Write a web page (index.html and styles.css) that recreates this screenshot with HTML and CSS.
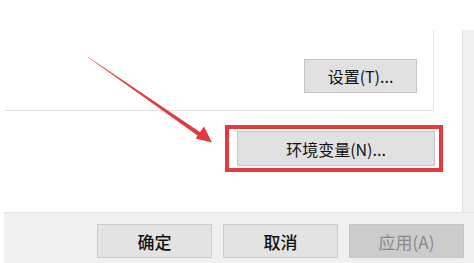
FILE: index.html
```html
<!DOCTYPE html>
<html lang="zh-CN">
<head>
<meta charset="utf-8">
<title>系统属性</title>
<link rel="stylesheet" href="styles.css">
</head>
<body>
<div class="window">
  <div class="main">
    <div class="panel">
      <div class="group">
        <button class="btn btn-settings">设置(T)...</button>
      </div>
      <div class="env-row">
        <div class="highlight">
          <button class="btn btn-env">环境变量(N)...</button>
        </div>
      </div>
    </div>
    <div class="side"></div>
  </div>
  <div class="footer">
    <button class="btn btn-foot">确定</button>
    <button class="btn btn-foot">取消</button>
    <button class="btn btn-foot btn-disabled">应用(A)</button>
  </div>
</div>
<svg class="arrow" width="474" height="263" viewBox="0 0 474 263">
  <polygon points="87.8,56.7 88.3,57.6 198.6,136.2 201,132.8" fill="#e23a3d"/>
  <polygon points="212,142.5 195.5,138.5 204,126.5" fill="#e23a3d"/>
</svg>
</body>
</html>
```

FILE: styles.css
```css
html, body {
  margin: 0;
  padding: 0;
}
body {
  width: 474px;
  height: 263px;
  overflow: hidden;
  background: #ffffff;
  position: relative;
  font-family: "Noto Sans CJK SC", "Liberation Sans", sans-serif;
}
.window {
  display: flex;
  flex-direction: column;
  height: 263px;
  padding-top: 30px;
  box-sizing: border-box;
}
.main {
  display: flex;
  height: 182px;
  margin-left: 4px;
}
.panel {
  width: 458px;
  background: #ffffff;
  border-right: 1px solid #dedede;
  display: flex;
  flex-direction: column;
}
.group {
  width: 430px;
  height: 81px;
  border-right: 1px solid #e2e2e2;
  border-bottom: 1px solid #e2e2e2;
  display: flex;
  justify-content: flex-end;
  align-items: flex-end;
  padding-right: 16px;
  padding-bottom: 17px;
  box-sizing: border-box;
}
.side {
  flex: 1;
  background: #f0f0f0;
}
.btn {
  font-family: "Noto Sans CJK SC", "Liberation Sans", sans-serif;
  font-size: 16px;
  color: #111111;
  background: #e1e1e1;
  border: 1px solid #c6c6c6;
  margin: 0;
  padding: 0;
  box-sizing: border-box;
  display: flex;
  align-items: center;
  justify-content: center;
  line-height: 1;
}
.btn-settings {
  width: 113px;
  height: 34px;
}
.env-row {
  display: flex;
  justify-content: flex-end;
  padding-right: 19px;
  margin-top: 14px;
}
.highlight {
  border: 4px solid #e23a3d;
  padding: 2px 4px 2px 8px;
  display: flex;
}
.btn-env {
  width: 198px;
  height: 35px;
}
.footer {
  flex: 1;
  margin-left: 4px;
  background: #f0f0f0;
  border-top: 1px solid #e4e4e4;
  display: flex;
  justify-content: flex-end;
  align-items: flex-start;
  gap: 11px;
  padding: 11px 10px 0 0;
}
.btn-foot {
  width: 115px;
  height: 34px;
  font-size: 17px;
  font-weight: 500;
  background: #e3e3e3;
  border-color: #cbcbcb;
}
.btn-disabled {
  background: #cccccc;
  border-color: #c4c4c4;
  color: #8a8a8a;
  font-weight: 400;
}
.arrow {
  position: absolute;
  left: 0;
  top: 0;
  pointer-events: none;
}
```
